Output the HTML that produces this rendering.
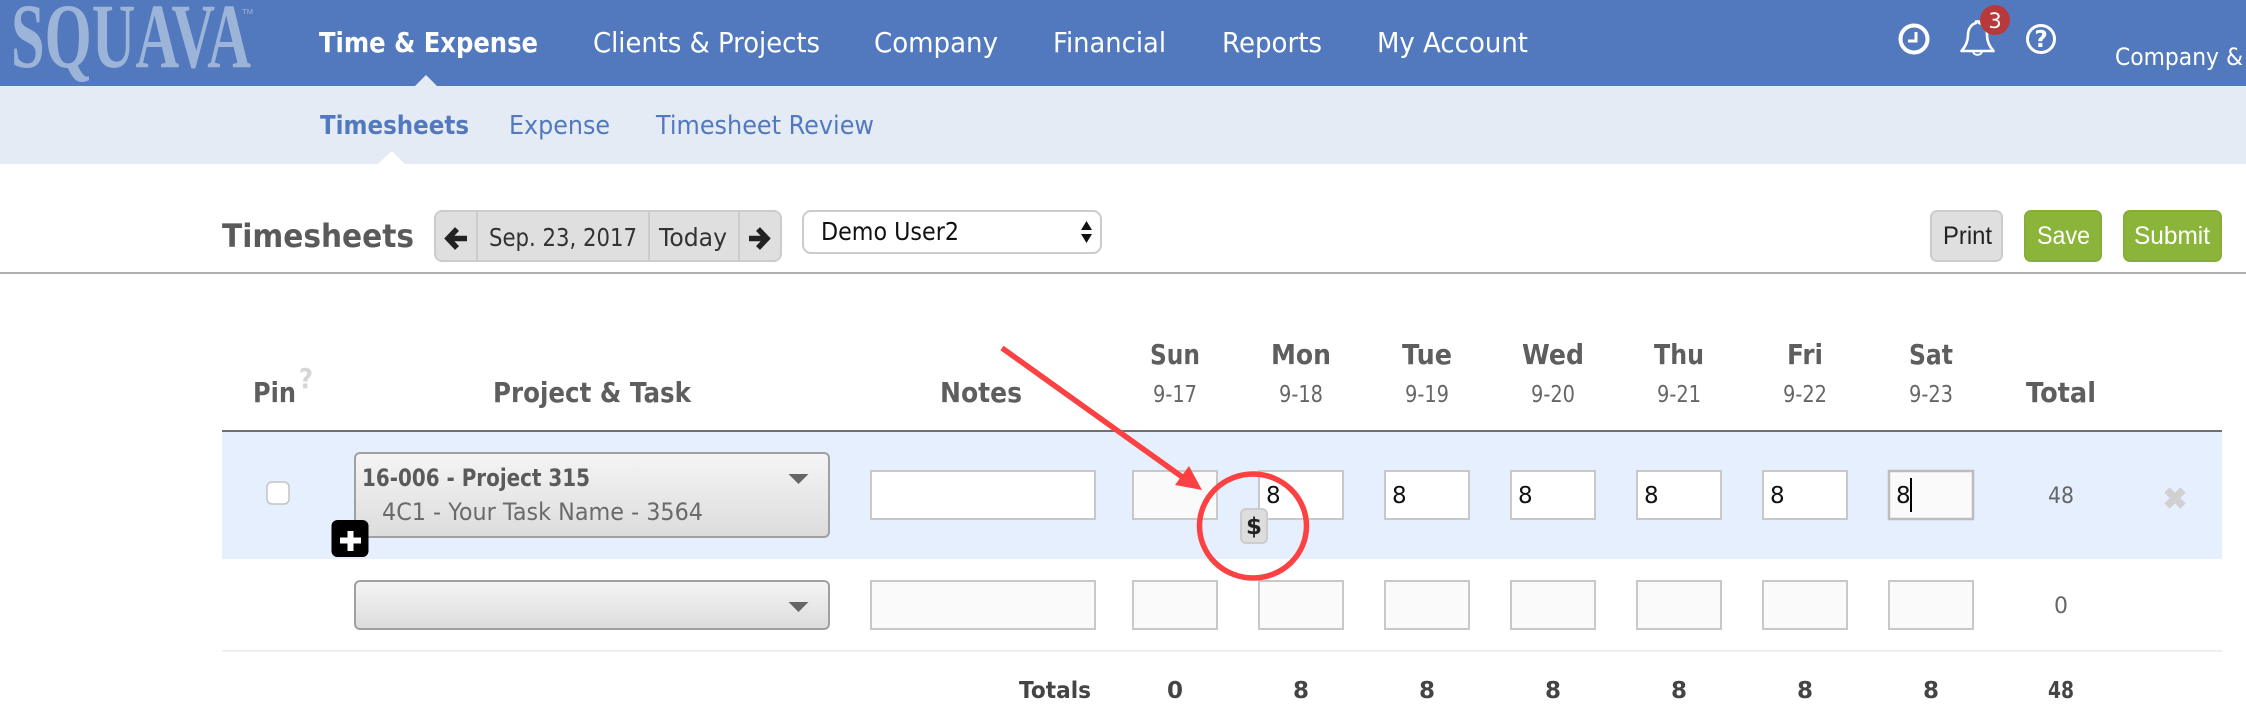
<!DOCTYPE html>
<html><head><meta charset="utf-8"><title>Timesheets</title>
<style>
html,body{margin:0;padding:0;background:#fff;width:2246px;height:722px;overflow:hidden}
svg{display:block}
text{font-family:"DejaVu Sans","Liberation Sans",sans-serif}
.n{fill:#fff;font-size:27.5px}
.s{fill:#5279bd;font-size:26px}
.h{fill:#5e5e5e;font-size:28px;font-weight:700}
.d{fill:#666;font-size:23px}
.v{fill:#111;font-size:23px}
.t{fill:#444;font-size:23px;font-weight:700}
.a{font-family:"Liberation Sans",sans-serif;font-size:25px}
.i{stroke:#c8c8c8;stroke-width:2;fill:#fff}
.e{stroke:#c8c8c8;stroke-width:2;fill:#fafafa}
</style></head><body>
<svg width="2246" height="722" viewBox="0 0 2246 722" xmlns="http://www.w3.org/2000/svg">
<defs><linearGradient id="g" x1="0" y1="0" x2="0" y2="1"><stop offset="0" stop-color="#f5f5f5"/><stop offset="1" stop-color="#dcdcdc"/></linearGradient></defs>
<rect width="2246" height="86" fill="#5279bd"/>
<rect y="86" width="2246" height="78" fill="#e4ebf5"/>
<path d="M415 86L426 75L437 86Z" fill="#e4ebf5"/>
<path d="M378 164L392 151L405 164Z" fill="#fff"/>

<text x="11" y="67" textLength="240" lengthAdjust="spacingAndGlyphs" font-weight="700" style="font-family:'Liberation Serif',serif;font-size:92px" fill="#9db4d9">SQUAVA</text>
<text x="242" y="14" textLength="11" lengthAdjust="spacingAndGlyphs" style="font-family:'Liberation Sans',sans-serif;font-size:7px" fill="#9db4d9">TM</text>

<text class="n" x="319" y="52" textLength="219" lengthAdjust="spacingAndGlyphs" font-weight="700">Time &amp; Expense</text>
<text class="n" x="593" y="52" textLength="227" lengthAdjust="spacingAndGlyphs">Clients &amp; Projects</text>
<text class="n" x="874" y="52" textLength="124" lengthAdjust="spacingAndGlyphs">Company</text>
<text class="n" x="1053" y="52" textLength="113" lengthAdjust="spacingAndGlyphs">Financial</text>
<text class="n" x="1222" y="52" textLength="100" lengthAdjust="spacingAndGlyphs">Reports</text>
<text class="n" x="1377" y="52" textLength="151" lengthAdjust="spacingAndGlyphs">My Account</text>

<circle cx="1914" cy="39" r="13.500" fill="none" stroke="#fff" stroke-width="4"/>
<path d="M1916 32V41H1908" fill="none" stroke="#fff" stroke-width="3"/>
<path d="M1961.500 51C1966 46 1968 41 1968 35C1968 28 1972 24 1976 23V21.500H1979V23C1984 24 1987 28 1987 35C1987 41 1989 46 1993.500 51Z" fill="none" stroke="#fff" stroke-width="2.600" stroke-linejoin="round"/>
<path d="M1973 52A5 5 0 0 0 1982 52" fill="none" stroke="#fff" stroke-width="2"/>
<circle cx="1995" cy="20" r="15" fill="#b8393c"/>
<text x="1995" y="28" text-anchor="middle" fill="#fff" style="font-size:21px">3</text>
<circle cx="2041" cy="39" r="13.500" fill="none" stroke="#fff" stroke-width="3"/>
<text x="2041" y="47" text-anchor="middle" fill="#fff" font-weight="700" style="font-size:23px">?</text>
<text x="2115" y="65" textLength="128" lengthAdjust="spacingAndGlyphs" fill="#fff" style="font-size:24px">Company &amp;</text>

<text class="s" x="320" y="134" textLength="149" lengthAdjust="spacingAndGlyphs" font-weight="700">Timesheets</text>
<text class="s" x="509" y="134" textLength="101" lengthAdjust="spacingAndGlyphs">Expense</text>
<text class="s" x="656" y="134" textLength="218" lengthAdjust="spacingAndGlyphs">Timesheet Review</text>

<text x="222" y="247" textLength="192" lengthAdjust="spacingAndGlyphs" fill="#5a5a5a" font-weight="700" style="font-size:32px">Timesheets</text>

<rect x="435" y="211" width="346" height="50" rx="7" fill="#dfdfdf" stroke="#ccc" stroke-width="2"/>
<path d="M477 211V261M649 211V261M739 211V261" stroke="#ccc" stroke-width="2"/>
<path d="M457 229L448 238.500L457 248M449 238.500H467" fill="none" stroke="#222" stroke-width="5.500"/>
<path d="M758 229L767 238.500L758 248M766 238.500H749" fill="none" stroke="#222" stroke-width="5.500"/>
<text x="489" y="246" textLength="148" lengthAdjust="spacingAndGlyphs" fill="#333" style="font-size:25px">Sep. 23, 2017</text>
<text x="659" y="246" textLength="68" lengthAdjust="spacingAndGlyphs" fill="#333" style="font-size:25px">Today</text>

<rect x="803" y="211" width="298" height="42" rx="8" fill="#fff" stroke="#ccc" stroke-width="2"/>
<text x="821" y="240" textLength="138" lengthAdjust="spacingAndGlyphs" fill="#111" style="font-size:25px">Demo User2</text>
<path d="M1081 230L1086.500 221L1092 230ZM1081 234L1086.500 243L1092 234Z" fill="#111"/>

<rect x="1931" y="211" width="71" height="50" rx="6" fill="#dfdfdf" stroke="#ccc" stroke-width="2"/>
<text class="a" x="1943" y="244" textLength="49" lengthAdjust="spacingAndGlyphs" fill="#222">Print</text>
<rect x="2025" y="211" width="76" height="50" rx="6" fill="#8bb53a" stroke="#86ad38" stroke-width="2"/>
<text class="a" x="2037" y="244" textLength="53" lengthAdjust="spacingAndGlyphs" fill="#fff">Save</text>
<rect x="2124" y="211" width="97" height="50" rx="6" fill="#8bb53a" stroke="#86ad38" stroke-width="2"/>
<text class="a" x="2134" y="244" textLength="76" lengthAdjust="spacingAndGlyphs" fill="#fff">Submit</text>
<rect y="272" width="2246" height="2" fill="#b0b0b0"/>

<text class="h" x="253" y="402" textLength="43" lengthAdjust="spacingAndGlyphs">Pin</text>
<text x="299" y="388" textLength="14" lengthAdjust="spacingAndGlyphs" fill="#d5d5d5" font-weight="700" style="font-size:28px">?</text>
<text class="h" x="493" y="402" textLength="198" lengthAdjust="spacingAndGlyphs">Project &amp; Task</text>
<text class="h" x="940" y="402" textLength="82" lengthAdjust="spacingAndGlyphs">Notes</text>
<text class="h" x="2026" y="402" textLength="70" lengthAdjust="spacingAndGlyphs">Total</text>

<text class="h" x="1150" y="364" textLength="50" lengthAdjust="spacingAndGlyphs">Sun</text>
<text class="h" x="1271" y="364" textLength="60" lengthAdjust="spacingAndGlyphs">Mon</text>
<text class="h" x="1402" y="364" textLength="50" lengthAdjust="spacingAndGlyphs">Tue</text>
<text class="h" x="1522" y="364" textLength="62" lengthAdjust="spacingAndGlyphs">Wed</text>
<text class="h" x="1654" y="364" textLength="50" lengthAdjust="spacingAndGlyphs">Thu</text>
<text class="h" x="1787" y="364" textLength="36" lengthAdjust="spacingAndGlyphs">Fri</text>
<text class="h" x="1909" y="364" textLength="44" lengthAdjust="spacingAndGlyphs">Sat</text>

<text class="d" x="1153" y="402" textLength="44" lengthAdjust="spacingAndGlyphs">9-17</text>
<text class="d" x="1279" y="402" textLength="44" lengthAdjust="spacingAndGlyphs">9-18</text>
<text class="d" x="1405" y="402" textLength="44" lengthAdjust="spacingAndGlyphs">9-19</text>
<text class="d" x="1531" y="402" textLength="44" lengthAdjust="spacingAndGlyphs">9-20</text>
<text class="d" x="1657" y="402" textLength="44" lengthAdjust="spacingAndGlyphs">9-21</text>
<text class="d" x="1783" y="402" textLength="44" lengthAdjust="spacingAndGlyphs">9-22</text>
<text class="d" x="1909" y="402" textLength="44" lengthAdjust="spacingAndGlyphs">9-23</text>

<rect x="222" y="432" width="2000" height="127" fill="#e5effd"/>
<rect x="222" y="430" width="2000" height="2" fill="#707070"/>
<rect x="222" y="650" width="2000" height="2" fill="#eee"/>

<rect x="267" y="482" width="22" height="22" rx="5" fill="#fff" stroke="#c4c4c4" stroke-width="1.500"/>

<rect x="355" y="453" width="474" height="84" rx="5" fill="url(#g)" stroke="#a0a0a0" stroke-width="2"/>
<path d="M788.500 474H808.500L798.500 484Z" fill="#666"/>
<text x="362" y="486" textLength="228" lengthAdjust="spacingAndGlyphs" fill="#5a5a5a" font-weight="700" style="font-size:24px">16-006 - Project 315</text>
<text x="382" y="520" textLength="321" lengthAdjust="spacingAndGlyphs" fill="#6a6a6a" style="font-size:24px">4C1 - Your Task Name - 3564</text>

<rect x="331.500" y="520" width="37" height="37" rx="6" fill="#000"/>
<path d="M340 540.500H361M350.500 531V551" stroke="#fff" stroke-width="6"/>

<rect x="355" y="581" width="474" height="48" rx="5" fill="url(#g)" stroke="#a0a0a0" stroke-width="2"/>
<path d="M788.500 602H808.500L798.500 612Z" fill="#666"/>

<rect class="i" x="871" y="471" width="224" height="48"/>
<rect class="e" x="1133" y="471" width="84" height="48"/>
<rect class="i" x="1259" y="471" width="84" height="48"/>
<rect class="i" x="1385" y="471" width="84" height="48"/>
<rect class="i" x="1511" y="471" width="84" height="48"/>
<rect class="i" x="1637" y="471" width="84" height="48"/>
<rect class="i" x="1763" y="471" width="84" height="48"/>
<rect x="1889" y="471" width="84" height="48" fill="#fafafa" stroke="#bdbdbd" stroke-width="2.500"/>

<text class="v" x="1266" y="503">8</text>
<text class="v" x="1392" y="503">8</text>
<text class="v" x="1518" y="503">8</text>
<text class="v" x="1644" y="503">8</text>
<text class="v" x="1770" y="503">8</text>
<text class="v" x="1896" y="503">8</text>
<rect x="1910" y="478" width="2" height="34" fill="#000"/>

<rect class="e" x="871" y="581" width="224" height="48"/>
<rect class="e" x="1133" y="581" width="84" height="48"/>
<rect class="e" x="1259" y="581" width="84" height="48"/>
<rect class="e" x="1385" y="581" width="84" height="48"/>
<rect class="e" x="1511" y="581" width="84" height="48"/>
<rect class="e" x="1637" y="581" width="84" height="48"/>
<rect class="e" x="1763" y="581" width="84" height="48"/>
<rect class="e" x="1889" y="581" width="84" height="48"/>

<text x="2048" y="503" textLength="26" lengthAdjust="spacingAndGlyphs" fill="#666" style="font-size:22px">48</text>
<text x="2061" y="613" text-anchor="middle" fill="#666" style="font-size:22px">0</text>
<path d="M2167 490L2183 506M2183 490L2167 506" stroke="#d0d0d0" stroke-width="7.500"/>

<text class="t" x="1019" y="698" textLength="72" lengthAdjust="spacingAndGlyphs">Totals</text>
<text class="t" x="1175" y="698" text-anchor="middle">0</text>
<text class="t" x="1301" y="698" text-anchor="middle">8</text>
<text class="t" x="1427" y="698" text-anchor="middle">8</text>
<text class="t" x="1553" y="698" text-anchor="middle">8</text>
<text class="t" x="1679" y="698" text-anchor="middle">8</text>
<text class="t" x="1805" y="698" text-anchor="middle">8</text>
<text class="t" x="1931" y="698" text-anchor="middle">8</text>
<text class="t" x="2048" y="698" textLength="26" lengthAdjust="spacingAndGlyphs">48</text>

<rect x="1241" y="509" width="26" height="34" rx="5" fill="#ddd" stroke="#ccc" stroke-width="2"/>
<text x="1254" y="534" text-anchor="middle" fill="#222" font-weight="700" style="font-size:23px">$</text>

<ellipse cx="1253" cy="526" rx="53.500" ry="52" fill="none" stroke="#fb4141" stroke-width="5.500"/>
<path d="M1002 348L1192 484" stroke="#fb4141" stroke-width="5.500"/>
<path d="M1202 490L1189 466L1175 485Z" fill="#fb4141"/>
</svg>
</body></html>
